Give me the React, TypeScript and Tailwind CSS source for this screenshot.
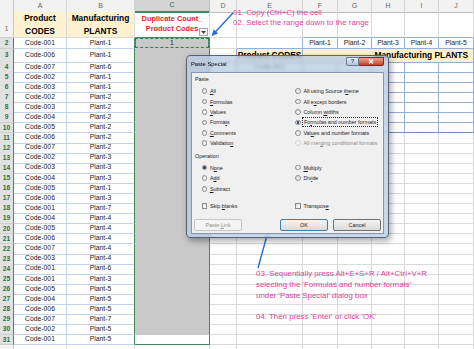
import React from "react";

const GRID = "grid grid-cols-[14px_53px_68px_75px_27px_66px_35px_34px_33px_34px_35px]";
const LETTERS = ["A", "B", "C", "D", "E", "F", "G", "H", "I", "J"];

// rows 2..31
const data: [string, string][] = [
  ["Code-001", "Plant-1"], ["Code-006", "Plant-1"], ["Code-007", "Plant-6"], ["Code-002", "Plant-1"],
  ["Code-003", "Plant-1"], ["Code-002", "Plant-2"], ["Code-003", "Plant-2"], ["Code-004", "Plant-2"],
  ["Code-005", "Plant-2"], ["Code-006", "Plant-2"], ["Code-007", "Plant-2"], ["Code-002", "Plant-3"],
  ["Code-003", "Plant-3"], ["Code-004", "Plant-3"], ["Code-005", "Plant-1"], ["Code-006", "Plant-3"],
  ["Code-001", "Plant-7"], ["Code-004", "Plant-4"], ["Code-005", "Plant-4"], ["Code-006", "Plant-4"],
  ["Code-007", "Plant-4"], ["Code-003", "Plant-4"], ["Code-001", "Plant-6"], ["Code-001", "Plant-3"],
  ["Code-005", "Plant-5"], ["Code-004", "Plant-5"], ["Code-006", "Plant-5"], ["Code-007", "Plant-7"],
  ["Code-002", "Plant-5"], ["Code-001", "Plant-5"],
];

const R_GRID = "border-r-[#dadada]", B_GRID = "border-b-[#dadada]";
const R_LIST = "border-r-[#c3d3ea]", B_LIST = "border-b-[#c3d3ea]";
const R_SEL = "border-r-[#3d8c5c]", B_SEL = "border-b-[#3d8c5c]";
const R_TBL = "border-r-[#95b0d3]", B_TBL = "border-b-[#95b0d3]", B_TBL_END = "border-b-[#6f8fbb]";
const B_GREY = "border-b-[#c9c9c9]";
const YELLOW = "bg-[#fdf1cf]";

const rowHeight = (r: number) =>
  r === 1 ? "h-[26px]" : r === 2 ? "h-[11px]" : r === 3 ? "h-[13px]" : "h-[10.1px]";

function cellClass(r: number, c: number): string {
  const inList = r >= 2 && r <= 31;
  if (c <= 2) {
    if (r === 1) return `${YELLOW} ${R_GRID} ${B_GRID}`;
    if (inList) return `${c === 2 ? R_SEL : R_LIST} ${B_LIST}`;
    return `${R_GRID} ${B_GRID}`;
  }
  if (c === 3) {
    if (r === 1) return `${R_GRID} ${B_SEL}`;
    if (r === 31) return `${R_SEL} ${B_SEL}`;
    if (inList) return `bg-[#c9c9c9] ${R_SEL} ${B_GREY}`;
    return `${R_GRID} ${B_GRID}`;
  }
  if (c === 4) return `${r >= 3 && r <= 10 ? R_TBL : R_GRID} ${B_GRID}`;
  if (c === 5) {
    if (r === 2) return `${R_TBL} ${B_TBL}`;
    if (r === 3) return `${YELLOW} font-bold text-[8.4px] text-black ${R_TBL} ${B_TBL}`;
    if (r >= 4 && r <= 10) return `${R_TBL} ${r === 10 ? B_TBL_END : B_TBL}`;
    return `${R_GRID} ${B_GRID}`;
  }
  if (r === 1) return `${R_GRID} ${B_TBL}`;
  if (r === 2) return `${R_TBL} ${B_TBL}`;
  if (r >= 4 && r <= 10) return `${R_TBL} ${r === 10 ? B_TBL_END : B_TBL}`;
  return `${R_GRID} ${B_GRID}`;
}

function cellContent(r: number, c: number): React.ReactNode {
  if (r === 1 && c === 1) return <HeadText a="Product" b="CODES" />;
  if (r === 1 && c === 2) return <HeadText a="Manufacturing" b="PLANTS" />;
  if (r === 1 && c === 3)
    return (
      <>
        <div className="flex flex-col items-center font-bold text-[7.4px] leading-[10px] text-[#e3262e] -mt-[2px]">
          <span>Duplicate Count_</span>
          <span>Product Codes</span>
        </div>
        <span className="absolute right-[1px] bottom-[1px] w-[9px] h-[8px] border border-[#a9a9a9] bg-[#f7f7f7] flex items-center justify-center">
          <svg width="5" height="3" viewBox="0 0 5 3"><path d="M0 0h5L2.5 3z" fill="#444" /></svg>
        </span>
      </>
    );
  if (r >= 2 && r <= 31 && c === 1) return data[r - 2][0];
  if (r >= 2 && r <= 31 && c === 2) return data[r - 2][1];
  if (r === 2 && c === 3)
    return (
      <>
        1<span className="absolute inset-0 border border-dashed border-[#2e7d4f]" />
      </>
    );
  if (r === 2 && c >= 6) return `Plant-${c - 5}`;
  if (r === 3 && c === 5) return "Product CODES";
  if (r === 4 && c === 5) return "Code-001";
  return null;
}

function HeadText({ a, b }: { a: string; b: string }) {
  return (
    <div className="flex flex-col items-center font-bold text-[8.4px] leading-[12.5px] text-black">
      <span>{a}</span>
      <span>{b}</span>
    </div>
  );
}

function RowHead({ r }: { r: number }) {
  const sel = r >= 2 && r <= 31;
  return (
    <div
      className={`flex justify-center border-r border-b text-[6.6px] ${
        sel
          ? "items-center bg-[#e1e1e1] text-[#217346] font-bold border-r-[#3d8c5c] border-b-[#cfcfcf]"
          : r === 1
          ? "items-end pb-[3px] bg-[#f2f2f2] text-[#666] border-r-[#c8c8c8] border-b-[#cfcfcf]"
          : "items-center bg-[#f2f2f2] text-[#666] border-r-[#c8c8c8] border-b-[#cfcfcf]"
      }`}
    >
      {r <= 31 ? r : null}
    </div>
  );
}

function SheetRow({ r }: { r: number }) {
  const cells: React.ReactNode[] = [<RowHead key="h" r={r} />];
  for (let c = 1; c <= 10; c++) {
    if (r === 3 && c === 6) {
      cells.push(
        <div key={c} className={`col-span-5 flex items-center justify-end pr-[5px] whitespace-nowrap font-bold text-[8.4px] text-black border-r border-b ${YELLOW} ${R_TBL} ${B_TBL}`}>
          Manufacturing PLANTS
        </div>
      );
      break;
    }
    cells.push(
      <div key={c} className={`relative flex items-center justify-center overflow-hidden whitespace-nowrap leading-none border-r border-b ${cellClass(r, c)}`}>
        {cellContent(r, c)}
      </div>
    );
  }
  return <div className={`${GRID} ${rowHeight(r)}`}>{cells}</div>;
}

function Sheet() {
  const rows = Array.from({ length: 32 }, (_, i) => i + 1);
  return (
    <div className="flex flex-col">
      <div className={`${GRID} h-[12px]`}>
        <div className="bg-[#f2f2f2] border-r border-b border-r-[#c8c8c8] border-b-[#bdbdbd]" />
        {LETTERS.map((l) => (
          <div
            key={l}
            className={`flex items-center justify-center text-[7px] border-r ${
              l === "C"
                ? "bg-[#d4d4d4] text-[#2f5f44] border-b-2 border-r-[#c0c0c0] border-b-[#3d8c5c]"
                : "bg-[#f2f2f2] text-[#666] border-b border-r-[#d4d4d4] border-b-[#bdbdbd]"
            }`}
          >
            {l}
          </div>
        ))}
      </div>
      {rows.map((r) => (
        <SheetRow key={r} r={r} />
      ))}
    </div>
  );
}

function Annotations() {
  return (
    <div className="text-[7.9px] text-[#e2419b] leading-[10px]">
      <div className="absolute left-[233px] top-[8px] flex flex-col whitespace-nowrap">
        <span>01. Copy (Ctrl+C) the cell</span>
        <span>02. Select the range down to the range</span>
      </div>
      <div className="absolute left-[256px] top-[269px] flex flex-col whitespace-nowrap leading-[10.8px]">
        <span>03. Sequentially press Alt+E+S+R / Alt+Ctrl+V+R</span>
        <span>selecting the 'Formulas and number formats'</span>
        <span>under 'Paste Special' dialog box</span>
        <span className="mt-[11px]">04. Then press 'Enter' or click 'OK'</span>
      </div>
    </div>
  );
}

function Arrows() {
  const blue = "#1f6fd8";
  return (
    <svg className="absolute inset-0 pointer-events-none" width="474" height="349" viewBox="0 0 474 349">
      <defs>
        <marker id="ah" viewBox="0 0 10 10" refX="8" refY="5" markerWidth="4.5" markerHeight="4.5" orient="auto">
          <path d="M0,0 L10,5 L0,10 z" fill={blue} />
        </marker>
      </defs>
      <line x1="233" y1="13" x2="212.5" y2="35" stroke={blue} strokeWidth="1.4" markerEnd="url(#ah)" />
      <line x1="258" y1="268" x2="296.5" y2="128" stroke={blue} strokeWidth="1.4" markerEnd="url(#ah)" />
      <line x1="297" y1="130" x2="299" y2="217" stroke={blue} strokeWidth="1.4" markerEnd="url(#ah)" />
    </svg>
  );
}

type Lbl = [string, string, string];

function Label({ t, dim }: { t: Lbl; dim?: boolean }) {
  return (
    <span className={`whitespace-nowrap ${dim ? "text-[#8e8e8e]" : "text-[#1b1b1b]"}`}>
      {t[0]}
      <span className="underline">{t[1]}</span>
      {t[2]}
    </span>
  );
}

function Radio({ checked, dim }: { checked?: boolean; dim?: boolean }) {
  return (
    <span
      className={`shrink-0 w-[5.6px] h-[5.6px] rounded-full border flex items-center justify-center ${
        dim ? "border-[#d4d4d4] bg-[#f4f4f4]" : "border-[#8a8a8a] bg-linear-to-br from-[#dcdcdc] to-white"
      }`}
    >
      {checked && <span className="w-[2.6px] h-[2.6px] rounded-full bg-[#20406a]" />}
    </span>
  );
}

function Check() {
  return <span className="shrink-0 w-[5.6px] h-[5.6px] border border-[#8a8a8a] bg-linear-to-br from-[#dcdcdc] to-white" />;
}

function Opt({ t, checked, dim, focus, box }: { t: Lbl; checked?: boolean; dim?: boolean; focus?: boolean; box?: boolean }) {
  return (
    <div className="flex items-center gap-[2.6px]">
      {box ? <Check /> : <Radio checked={checked} dim={dim} />}
      <span className={focus ? "outline outline-dotted outline-[0.6px] outline-[#333] px-[0.5px]" : ""}>
        <Label t={t} dim={dim} />
      </span>
    </div>
  );
}

function Btn({ children, kind }: { children: React.ReactNode; kind?: "disabled" | "default" }) {
  return (
    <div
      className={`w-[48px] h-[12px] rounded-[2px] border flex items-center justify-center ${
        kind === "disabled"
          ? "border-[#c4c4c4] bg-[#f4f4f4] text-[#a0a0a0]"
          : kind === "default"
          ? "border-[#3c7fb1] bg-linear-to-b from-[#f4f4f4] to-[#dadada] text-[#1b1b1b]"
          : "border-[#707070] bg-linear-to-b from-[#f4f4f4] to-[#dadada] text-[#1b1b1b]"
      }`}
    >
      {children}
    </div>
  );
}

function PasteSpecial() {
  const left: Lbl[] = [["", "A", "ll"], ["", "F", "ormulas"], ["", "V", "alues"], ["Forma", "t", "s"], ["", "C", "omments"], ["Validatio", "n", ""]];
  const right: Lbl[] = [["All using Source t", "h", "eme"], ["All e", "x", "cept borders"], ["Column ", "w", "idths"], ["Fo", "r", "mulas and number formats"], ["Val", "u", "es and number formats"], ["All mer", "g", "ing conditional formats"]];
  return (
    <div className="absolute left-[186px] top-[55px] w-[203px] h-[183px] rounded-[4px] border border-[#54627a] bg-[#b6c9e2]/75 backdrop-blur-[1.5px] shadow-[2px_3px_6px_rgba(0,0,0,0.35)] flex flex-col px-[4px] pb-[3px] text-[5.4px]">
      <div className="h-[16px] flex justify-between">
        <span className="mt-[4px] text-[5.8px] text-black">Paste Special</span>
        <div className="flex h-[9px] mt-[1px]">
          <span className="w-[13px] h-full rounded-bl-[2px] border border-[#6d7b8f] bg-linear-to-b from-[#e4ebf4] to-[#b7c4d6] flex items-center justify-center text-[6px] font-bold text-[#3d4c60]">?</span>
          <span className="w-[25px] h-full rounded-br-[2px] border border-l-0 border-[#7a2a20] bg-linear-to-b from-[#e9a392] to-[#c63b25] flex items-center justify-center">
            <svg width="6" height="5" viewBox="0 0 6 5"><path d="M1 0.5L5 4.5M5 0.5L1 4.5" stroke="white" strokeWidth="1.3" /></svg>
          </span>
        </div>
      </div>
      <div className="flex-1 bg-[#f0f0f0] border border-[#8596ad] flex flex-col px-[2px]">
        <div className="h-[12px] flex items-center pl-[1px] text-[#1b1b1b]">Paste</div>
        <div className="mt-[1px] ml-[7.7px] grid grid-cols-[93.5px_1fr] auto-rows-[10.4px] items-center">
          {left.map((t, i) => (
            <React.Fragment key={i}>
              <Opt t={t} />
              <Opt t={right[i]} checked={i === 3} focus={i === 3} dim={i === 5} />
            </React.Fragment>
          ))}
        </div>
        <div className="mt-[2px] h-[12px] flex items-center pl-[1px] text-[#1b1b1b]">Operation</div>
        <div className="ml-[7.7px] grid grid-cols-[93.5px_1fr] auto-rows-[10.6px] items-center">
          <Opt t={["N", "o", "ne"]} checked />
          <Opt t={["", "M", "ultiply"]} />
          <Opt t={["A", "d", "d"]} />
          <Opt t={["Div", "i", "de"]} />
          <Opt t={["", "S", "ubtract"]} />
        </div>
        <div className="mt-[7px] ml-[7.7px] h-[10px] grid grid-cols-[93.5px_1fr] items-center">
          <Opt t={["Skip ", "b", "lanks"]} box />
          <Opt t={["Transpos", "e", ""]} box />
        </div>
        <div className="mt-[8px] flex items-center">
          <Btn kind="disabled">
            <Label t={["Paste ", "L", "ink"]} dim />
          </Btn>
          <div className="flex-1" />
          <Btn kind="default">OK</Btn>
          <div className="w-[5px]" />
          <Btn>Cancel</Btn>
        </div>
      </div>
    </div>
  );
}

export default function App() {
  return (
    <div className="relative w-[474px] h-[349px] overflow-hidden bg-white font-['Liberation_Sans',Arial,sans-serif] text-[6.8px] text-[#222]">
      <Sheet />
      <Annotations />
      <Arrows />
      <PasteSpecial />
    </div>
  );
}
